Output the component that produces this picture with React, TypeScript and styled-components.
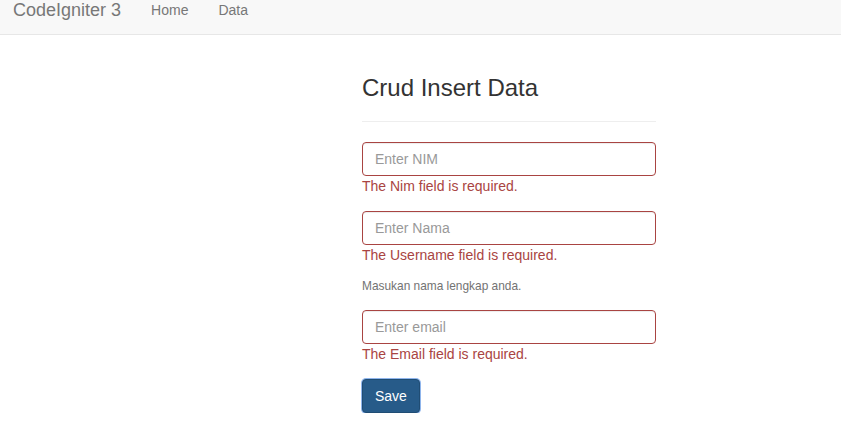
import { createGlobalStyle, styled } from 'styled-components';

const GlobalStyle = createGlobalStyle`
  * {
    box-sizing: border-box;
  }
  body {
    margin: 0;
    font-family: 'Liberation Sans', Arial, Helvetica, sans-serif;
    font-size: 14px;
    line-height: 1.42857143;
    color: #333;
    background: #fff;
  }
`;

const fields = [
  { placeholder: 'Enter NIM', error: 'The Nim field is required.' },
  {
    placeholder: 'Enter Nama',
    error: 'The Username field is required.',
    help: 'Masukan nama lengkap anda.',
  },
  { placeholder: 'Enter email', error: 'The Email field is required.' },
];

export default function App() {
  return (
    <>
      <GlobalStyle />
      <Styled.Navbar>
        <Styled.Brand href="#">CodeIgniter 3</Styled.Brand>
        <Styled.NavLink href="#">Home</Styled.NavLink>
        <Styled.NavLink href="#">Data</Styled.NavLink>
      </Styled.Navbar>
      <Styled.Container>
        <Styled.Column>
          <Styled.Title>Crud Insert Data</Styled.Title>
          <Styled.Rule />
          <form onSubmit={(e) => e.preventDefault()}>
            {fields.map((field) => (
              <Styled.FormGroup key={field.placeholder}>
                <Styled.Input type="text" placeholder={field.placeholder} />
                <Styled.Error>{field.error}</Styled.Error>
                {field.help && <Styled.Help>{field.help}</Styled.Help>}
              </Styled.FormGroup>
            ))}
            <Styled.Button type="submit">Save</Styled.Button>
          </form>
        </Styled.Column>
      </Styled.Container>
    </>
  );
}

const Styled = {
  Navbar: styled.nav`
    display: flex;
    align-items: stretch;
    height: 50px;
    margin-top: -15px;
    background-color: #f8f8f8;
    border-bottom: 1px solid #e7e7e7;
  `,
  Brand: styled.a`
    display: block;
    height: 50px;
    padding: 15px 15px 15px 13px;
    font-size: 18px;
    line-height: 20px;
    color: #777;
    text-decoration: none;
  `,
  NavLink: styled.a`
    display: block;
    padding: 15px;
    font-size: 14px;
    line-height: 20px;
    color: #777;
    text-decoration: none;
  `,
  Container: styled.div`
    padding-top: 20px;
  `,
  Column: styled.div`
    width: 294px;
    margin-left: 362px;
  `,
  Title: styled.h3`
    margin: 20px 0 10px;
    font-size: 24px;
    font-weight: 500;
    line-height: 1.1;
    color: #333;
  `,
  Rule: styled.hr`
    margin: 20px 0;
    border: 0;
    border-top: 1px solid #eee;
  `,
  FormGroup: styled.div`
    margin-bottom: 15px;
  `,
  Input: styled.input`
    display: block;
    width: 100%;
    height: 34px;
    padding: 6px 12px;
    font-family: inherit;
    font-size: 14px;
    line-height: 1.42857143;
    color: #555;
    background: #fff;
    border: 1px solid #a94442;
    border-radius: 4px;
    box-shadow: inset 0 1px 1px rgba(0, 0, 0, 0.075);
    outline: none;

    &::placeholder {
      color: #999;
    }
  `,
  Error: styled.p`
    margin: 0 0 10px;
    color: #a94442;
  `,
  Help: styled.small`
    font-size: 85%;
    color: #737373;
  `,
  Button: styled.button`
    display: inline-block;
    padding: 6px 12px;
    font-family: inherit;
    font-size: 14px;
    line-height: 1.42857143;
    color: #fff;
    background-color: #275b89;
    border: 1px solid #204d74;
    border-radius: 4px;
    box-shadow: 0 0 0 1px #8fb5ec;
    cursor: pointer;
  `,
};
